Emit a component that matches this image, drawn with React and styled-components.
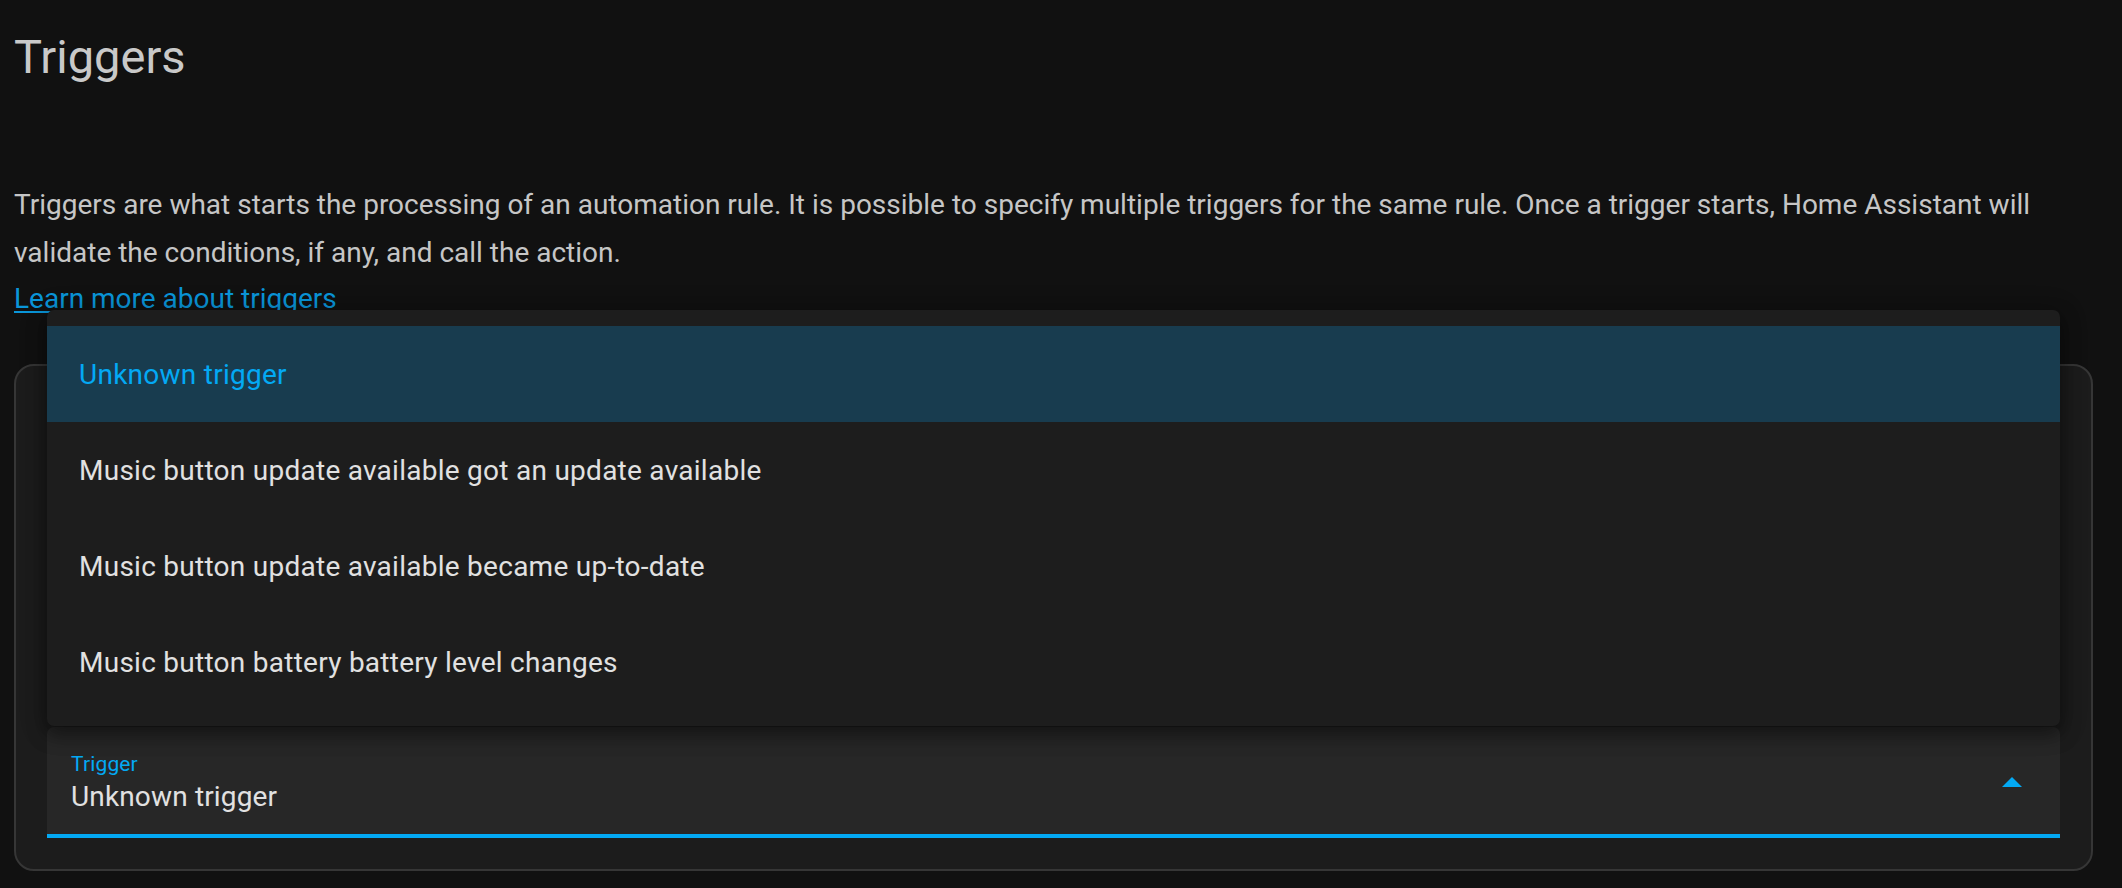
import React from 'react';
import styled, { createGlobalStyle } from 'styled-components';

const GlobalStyle = createGlobalStyle`
  html, body {
    margin: 0;
    padding: 0;
    background: #111111;
  }
  body {
    font-family: Roboto, "Noto Sans", sans-serif;
    -webkit-font-smoothing: antialiased;
  }
`;

const Page = styled.div`
  width: 2122px;
  height: 888px;
  box-sizing: border-box;
  padding: 29px 29px 0 14px;
  overflow: hidden;
  background: #111111;
`;

const Title = styled.h2`
  margin: 0;
  font-size: 47px;
  font-weight: 400;
  line-height: 56px;
  color: #c9c9c9;
`;

const Description = styled.p`
  margin: 96px 0 0;
  font-size: 28px;
  line-height: 48px;
  color: #c6c6c6;
`;

const LinkRow = styled.div`
  margin-top: -2px;
  font-size: 28px;
  line-height: 48px;
`;

const LearnMore = styled.a`
  color: #0a96da;
  text-decoration: underline;
  text-decoration-thickness: 2px;
  text-underline-offset: 3px;
`;

const Card = styled.section`
  margin-top: 41px;
  box-sizing: border-box;
  border: 2px solid #363636;
  border-radius: 20px;
  background: #1c1c1c;
  padding: 361px 31px 31px;
`;

const SelectWrap = styled.div`
  position: relative;
`;

const Field = styled.div`
  height: 111px;
  box-sizing: border-box;
  display: flex;
  align-items: flex-start;
  justify-content: space-between;
  padding: 0 38px 0 24px;
  background: #272727;
  border-radius: 7px 7px 0 0;
  border-bottom: 4px solid #03a9f4;
`;

const FieldText = styled.div`
  display: flex;
  flex-direction: column;
  padding-top: 25px;
  letter-spacing: 0.009375em;
`;

const Label = styled.span`
  font-size: 21px;
  line-height: 24px;
  color: #03a9f4;
`;

const Value = styled.span`
  margin-top: 5px;
  font-size: 28px;
  line-height: 32px;
  color: #e1e1e1;
`;

const Arrow = styled.svg`
  align-self: center;
  margin-top: 3px;
  flex: none;
`;

const Menu = styled.ul`
  position: absolute;
  left: 0;
  right: 0;
  bottom: calc(100% + 1px);
  z-index: 2;
  margin: 0;
  padding: 16px 0;
  list-style: none;
  background: #1d1d1d;
  border-radius: 7px;
  box-shadow: 0 8px 18px 2px rgba(0, 0, 0, 0.35), 0 3px 24px 4px rgba(0, 0, 0, 0.2);
`;

const MenuItem = styled.li`
  height: 96px;
  display: flex;
  align-items: center;
  padding: 0 32px;
  font-size: 28px;
  letter-spacing: 0.009375em;
  color: ${(p) => (p.$selected ? '#03a9f4' : '#e1e1e1')};
  background: ${(p) => (p.$selected ? '#183c4f' : 'transparent')};
`;

const options = [
  'Unknown trigger',
  'Music button update available got an update available',
  'Music button update available became up-to-date',
  'Music button battery battery level changes',
];

export default function App() {
  const selected = options[0];
  return (
    <>
      <GlobalStyle />
      <Page>
        <Title>Triggers</Title>
        <Description>
          Triggers are what starts the processing of an automation rule. It is possible to specify
          multiple triggers for the same rule. Once a trigger starts, Home Assistant will validate the
          conditions, if any, and call the action.
        </Description>
        <LinkRow>
          <LearnMore href="#">Learn more about triggers</LearnMore>
        </LinkRow>
        <Card>
          <SelectWrap>
            <Menu>
              {options.map((o) => (
                <MenuItem key={o} $selected={o === selected}>
                  {o}
                </MenuItem>
              ))}
            </Menu>
            <Field>
              <FieldText>
                <Label>Trigger</Label>
                <Value>{selected}</Value>
              </FieldText>
              <Arrow width="20" height="10" viewBox="0 0 20 10">
                <polygon points="0,10 10,0 20,10" fill="#03a9f4" />
              </Arrow>
            </Field>
          </SelectWrap>
        </Card>
      </Page>
    </>
  );
}
